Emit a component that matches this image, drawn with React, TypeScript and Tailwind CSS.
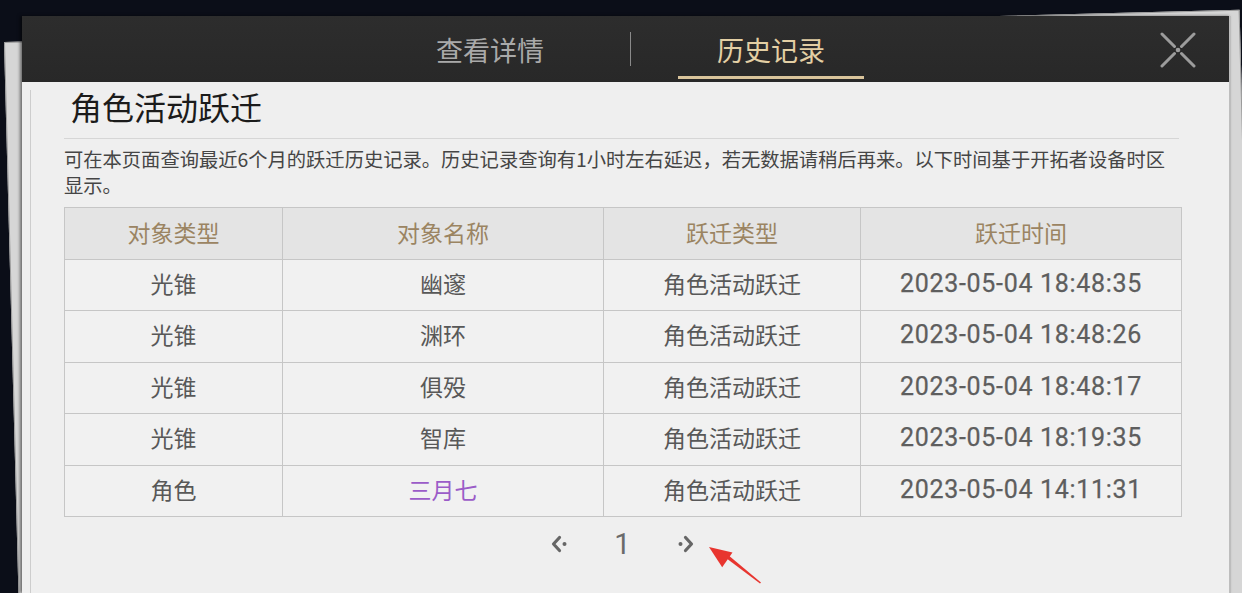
import React from "react";

const rows = [
  { type: "光锥", name: "幽邃", kind: "角色活动跃迁", time: "2023-05-04 18:48:35" },
  { type: "光锥", name: "渊环", kind: "角色活动跃迁", time: "2023-05-04 18:48:26" },
  { type: "光锥", name: "俱殁", kind: "角色活动跃迁", time: "2023-05-04 18:48:17" },
  { type: "光锥", name: "智库", kind: "角色活动跃迁", time: "2023-05-04 18:19:35" },
  { type: "角色", name: "三月七", kind: "角色活动跃迁", time: "2023-05-04 14:11:31", star4: true },
];

function CloseIcon() {
  return (
    <svg width="36" height="36" viewBox="0 0 36 36" fill="none">
      <g stroke="#9c9c9c" strokeWidth="3" strokeLinecap="round">
        <line x1="2" y1="2" x2="14.5" y2="14.5" />
        <line x1="21.5" y1="21.5" x2="34" y2="34" />
        <line x1="34" y1="2" x2="21.5" y2="14.5" />
        <line x1="14.5" y1="21.5" x2="2" y2="34" />
      </g>
      <circle cx="18" cy="18" r="2.3" fill="#9c9c9c" />
    </svg>
  );
}

function PageArrow({ dir }: { dir: "left" | "right" }) {
  // chevron plus a small dot, mirrored for the right one
  return (
    <svg width="18" height="18" viewBox="0 0 18 18" fill="none" className={dir === "right" ? "-scale-x-100" : ""}>
      <polyline points="9.5,2.5 3.5,9 9.5,15.5" stroke="#666666" strokeWidth="3.2" strokeLinecap="round" strokeLinejoin="round" />
      <circle cx="14.5" cy="9" r="2" fill="#666666" />
    </svg>
  );
}

function RedArrow() {
  return (
    <svg className="absolute left-0 top-0 pointer-events-none" width="1242" height="593" viewBox="0 0 1242 593">
      <polygon points="709,547 732.5,552.4 722.2,567.2" fill="#e8352f" />
      <polygon points="726,558 729,555.8 761,582.4 760,583.6" fill="#e8352f" />
    </svg>
  );
}

export default function App() {
  return (
    <div className="relative w-[1242px] h-[593px] overflow-hidden bg-[#0b0e18] font-['Noto_Sans_CJK_SC',sans-serif]">
      {/* card stacked behind, slightly tilted */}
      <div className="absolute left-[4px] top-[42px] w-[1236px] h-[600px] origin-top-left -rotate-[1.5deg] bg-[#d6d6d6] border border-[#9a9a9a]" />

      <div className="relative pt-[16px] pl-[22px] pr-[11px]">
        <div className="bg-[#efefef] border-r-2 border-[#bdbdbd] h-[577px] shadow-[-2px_0_3px_rgba(0,0,0,0.5)]">
          {/* header */}
          <div className="h-[66px] bg-gradient-to-b from-[#2d2d2d] to-[#282828] flex items-stretch pl-[380px]">
            <div className="w-[176px] flex items-center justify-center text-[27px] text-[#a9a9a9] pt-[2px]">查看详情</div>
            <div className="ml-[52px] w-px self-center h-[34px] bg-[#8a8a8a]" />
            <div className="ml-[47px] w-[186px] flex flex-col">
              <div className="flex-1 flex items-center justify-center text-[27px] text-[#e3cfa4] pt-[8px]">历史记录</div>
              <div className="h-[3px] mb-[3px] bg-[#d9c49b]" />
            </div>
            <div className="ml-auto mr-[33px] self-center pt-[2px]">
              <CloseIcon />
            </div>
          </div>

          {/* body */}
          <div className="relative pl-[42px] pr-[50px] pt-[4px]">
            <div className="absolute left-[8px] top-[8px] bottom-[-200px] w-px bg-[#cdcdcd]" />
            <div className="pl-[6px] h-[40px] leading-[40px] text-[32px] text-[#1b1b1b]">角色活动跃迁</div>
            <div className="mt-[12px] h-px bg-[#d6d6d6]" />
            <p className="mt-[7px] text-[19.3px] leading-[26px] text-[#454545] w-[1117px]">
              可在本页面查询最近6个月的跃迁历史记录。历史记录查询有1小时左右延迟，若无数据请稍后再来。以下时间基于开拓者设备时区
              <br />
              显示。
            </p>

            <table className="mt-[9px] w-[1117px] table-fixed border-collapse text-[23px]">
              <colgroup>
                <col className="w-[218px]" />
                <col className="w-[321px]" />
                <col className="w-[257px]" />
                <col className="w-[321px]" />
              </colgroup>
              <thead>
                <tr className="h-[52px] bg-[#e4e4e4] text-[#9b8462]">
                  {["对象类型", "对象名称", "跃迁类型", "跃迁时间"].map((h) => (
                    <th key={h} className="border border-[#c6c6c6] font-normal pb-[2px]">
                      {h}
                    </th>
                  ))}
                </tr>
              </thead>
              <tbody className="text-[#585858]">
                {rows.map((r) => (
                  <tr key={r.time} className="h-[51.4px] bg-[#f1f1f1]">
                    <td className="border border-[#c6c6c6] text-center pb-[4px]">{r.type}</td>
                    <td className={`border border-[#c6c6c6] text-center pb-[4px] ${r.star4 ? "text-[#9b5cc8]" : ""}`}>{r.name}</td>
                    <td className="border border-[#c6c6c6] text-center pb-[4px]">{r.kind}</td>
                    <td className="border border-[#c6c6c6] text-center pb-[3px] font-['Roboto',sans-serif] font-normal text-[25px] tracking-[0.7px] text-[#5e5e5e] [-webkit-text-stroke:0.25px_#5e5e5e]">
                      {r.time}
                    </td>
                  </tr>
                ))}
              </tbody>
            </table>

            <div className="w-[1117px] mt-[13px] flex items-center justify-center h-[28px]">
              <PageArrow dir="left" />
              <span className="mx-[46px] text-[29px] leading-[28px] text-[#6a6a6a] font-['Roboto',sans-serif]">1</span>
              <PageArrow dir="right" />
            </div>
          </div>
        </div>
      </div>

      <RedArrow />
    </div>
  );
}
